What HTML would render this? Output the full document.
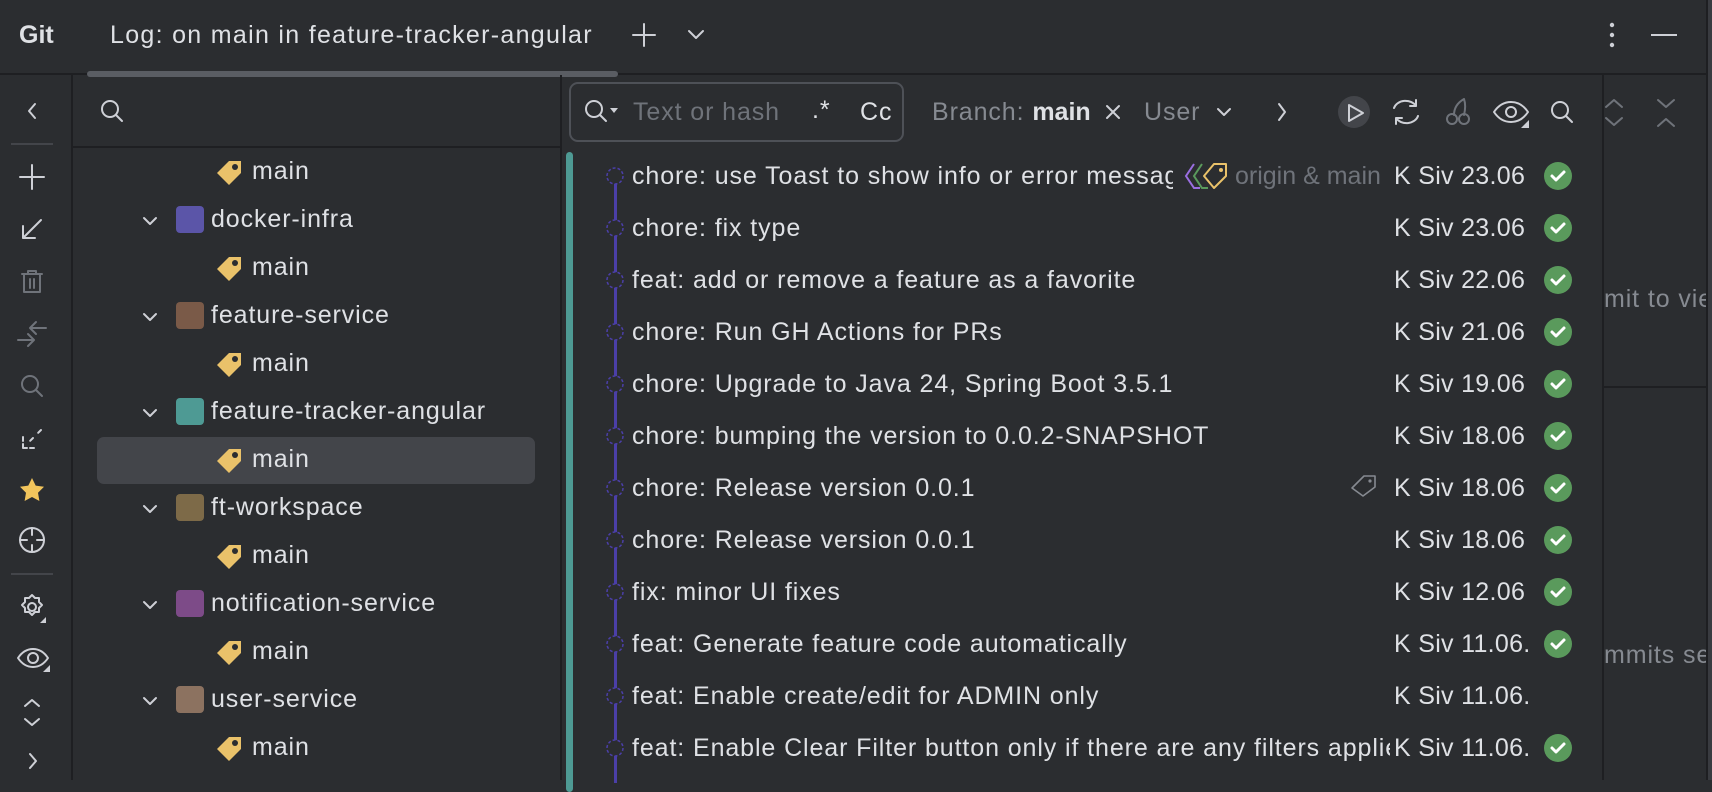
<!DOCTYPE html>
<html><head><meta charset="utf-8"><style>
*{margin:0;padding:0;box-sizing:border-box}
body{width:1712px;height:780px;background:#2b2d30;font-family:"Liberation Sans",sans-serif;color:#dfe1e5;position:relative;overflow:hidden}
.a{position:absolute;white-space:nowrap}
.t{font-size:25px;line-height:30px;letter-spacing:0.9px}
svg{position:absolute;overflow:visible}
.ic{stroke:#ced0d6;fill:none;stroke-width:2;stroke-linecap:round;stroke-linejoin:round}
.dim{stroke:#6f737a}
</style></head><body>
<div class="a" style="left:0;top:73px;width:1712px;height:2px;background:#1e1f22"></div>
<div class="a t" style="left:19px;top:20px;font-weight:bold;color:#dfe1e5;letter-spacing:0">Git</div>
<div class="a t" style="left:110px;top:20px;letter-spacing:1.3px">Log: on main in feature-tracker-angular</div>
<div class="a" style="left:87px;top:71px;width:531px;height:6px;border-radius:3px;background:#5a5d63"></div>
<svg style="left:632px;top:23px" width="24" height="24"><path class="ic" d="M12 1v22M1 12h22"/></svg>
<svg style="left:687px;top:29px" width="18" height="12"><path class="ic" d="M2 2l7 7 7-7"/></svg>
<svg style="left:1608px;top:22px" width="8" height="26"><circle cx="4" cy="3" r="2.2" fill="#ced0d6"/><circle cx="4" cy="13" r="2.2" fill="#ced0d6"/><circle cx="4" cy="23" r="2.2" fill="#ced0d6"/></svg>
<div class="a" style="left:1651px;top:34px;width:26px;height:2px;background:#ced0d6"></div>

<div class="a" style="left:71px;top:75px;width:2px;height:705px;background:#1e1f22"></div>
<svg style="left:26px;top:102px" width="12" height="18"><path class="ic" d="M9 2L3 9l6 7"/></svg>
<div class="a" style="left:11px;top:143px;width:42px;height:2px;background:#43454a"></div>
<svg style="left:18px;top:163px" width="28" height="28"><path class="ic" d="M14 2v24M2 14h24"/></svg>
<svg style="left:20px;top:217px" width="24" height="24"><path class="ic" d="M21 3L3 21M3 9v12h12"/></svg>
<svg style="left:20px;top:268px" width="24" height="28"><path class="ic dim" d="M2 6h20M8 6V3h8v3M4 6v18h16V6M10 11v9M14 11v9"/></svg>
<svg style="left:16px;top:320px" width="32" height="28"><path class="ic dim" d="M30 8H14M20 2l-6 6 6 6M2 20h16M12 14l6 6-6 6"/></svg>
<svg style="left:20px;top:374px" width="26" height="26"><circle class="ic dim" cx="10" cy="10" r="8"/><path class="ic dim" d="M16 16l6 6"/></svg>
<svg style="left:20px;top:427px" width="24" height="24"><path class="ic" d="M21 3l-4 4M13 11l-4 4M3 21V9M3 21h12" stroke-dasharray="4 3"/></svg>
<svg style="left:19px;top:477px" width="26" height="26"><path fill="#f2c55c" d="M13 1l3.7 7.6 8.3 1.2-6 5.9 1.4 8.3L13 20l-7.4 4 1.4-8.3-6-5.9 8.3-1.2z"/></svg>
<svg style="left:18px;top:526px" width="28" height="28"><circle class="ic" cx="14" cy="14" r="12"/><path class="ic" d="M14 2v7M14 19v7M2 14h7M19 14h7"/></svg>
<div class="a" style="left:11px;top:573px;width:42px;height:2px;background:#43454a"></div>
<svg style="left:18px;top:593px" width="30" height="30"><circle class="ic" cx="14" cy="14" r="4"/><path class="ic" d="M14 2l3 3h4v4l3 3-3 3v4h-4l-3 3-3-3H7v-4l-3-3 3-3V5h4z"/><path d="M28 24v6h-6z" fill="#ced0d6"/></svg>
<svg style="left:16px;top:645px" width="34" height="28"><path class="ic" d="M2 13c4-6 9-9 15-9s11 3 15 9c-4 6-9 9-15 9S6 19 2 13z"/><circle class="ic" cx="17" cy="13" r="5"/><path d="M34 20v7h-7z" fill="#ced0d6"/></svg>
<svg style="left:22px;top:697px" width="20" height="32"><path class="ic" d="M3 9l7-6 7 6M3 22l7 6 7-6"/></svg>
<svg style="left:27px;top:752px" width="12" height="18"><path class="ic" d="M3 2l6 7-6 7"/></svg>

<svg style="left:100px;top:99px" width="26" height="26"><circle class="ic" cx="10" cy="10" r="8"/><path class="ic" d="M16 16l6 6"/></svg>
<div class="a" style="left:73px;top:146px;width:488px;height:2px;background:#1e1f22"></div>
<div class="a" style="left:560px;top:75px;width:2px;height:705px;background:#1e1f22"></div>
<div class="a" style="left:97px;top:437px;width:438px;height:47px;border-radius:7px;background:#43454a"></div>
<div id="tree"></div>

<div class="a" style="left:569px;top:82px;width:335px;height:60px;border:2px solid #4e5157;border-radius:9px"></div>
<svg style="left:584px;top:99px" width="34" height="26"><circle class="ic" cx="10" cy="10" r="8"/><path class="ic" d="M16 16l6 6"/><path d="M26 9h8l-4 5z" fill="#ced0d6"/></svg>
<div class="a t" style="left:633px;top:97px;color:#6f737a">Text or hash</div>
<div class="a t" style="left:812px;top:95px;color:#dfe1e5">.*</div>
<div class="a t" style="left:860px;top:97px;color:#dfe1e5">Cc</div>
<div class="a t" style="left:932px;top:97px;color:#868a91">Branch: <span style="color:#dfe1e5;font-weight:bold;letter-spacing:0">main</span></div>
<svg style="left:1106px;top:105px" width="14" height="14"><path class="ic" stroke="#868a91" d="M1 1l12 12M13 1L1 13"/></svg>
<div class="a t" style="left:1144px;top:97px;color:#868a91">User</div>
<svg style="left:1216px;top:107px" width="16" height="10"><path class="ic" d="M2 2l6 6 6-6"/></svg>
<svg style="left:1276px;top:102px" width="12" height="20"><path class="ic" d="M3 2l6 8-6 8"/></svg>
<div class="a" style="left:1338px;top:96px;width:32px;height:32px;border-radius:16px;background:#43454a"></div>
<svg style="left:1347px;top:103px" width="18" height="20"><path class="ic" stroke="#9a9da3" d="M2 2v16l14-8z"/></svg>
<svg style="left:1390px;top:98px" width="32" height="28"><path class="ic" d="M4 10a12 10 0 0 1 22-2M28 18a12 10 0 0 1-22 2M26 2v6h-6M6 26v-6h6"/></svg>
<svg style="left:1444px;top:97px" width="28" height="30"><path class="ic dim" d="M10 18c0-6 3-12 10-16M20 2c2 6 1 12 0 16"/><circle class="ic dim" cx="8" cy="22" r="5"/><circle class="ic dim" cx="20" cy="22" r="5"/></svg>
<svg style="left:1492px;top:99px" width="38" height="30"><path class="ic" d="M2 13c4-6 10-10 17-10s13 4 17 10c-4 6-10 10-17 10S6 19 2 13z"/><circle class="ic" cx="19" cy="13" r="5"/><path d="M37 21v8h-8z" fill="#ced0d6"/></svg>
<svg style="left:1550px;top:100px" width="26" height="26"><circle class="ic" cx="10" cy="10" r="8"/><path class="ic" d="M16 16l6 6"/></svg>
<svg style="left:1604px;top:98px" width="20" height="30"><path class="ic dim" d="M2 9l8-7 8 7M2 20l8 7 8-7"/></svg>
<svg style="left:1656px;top:98px" width="20" height="30"><path class="ic dim" d="M2 2l8 7 8-7M2 28l8-7 8 7"/></svg>

<div class="a" style="left:566px;top:152px;width:7px;height:640px;border-radius:4px;background:#4e9a94"></div>
<div class="a" style="left:614px;top:183px;width:2.5px;height:600px;background:#4b3fa8"></div>
<div id="log"></div>

<div class="a" style="left:1602px;top:75px;width:2px;height:705px;background:#1e1f22"></div>
<div class="a" style="left:1706px;top:0;width:2px;height:780px;background:#1e1f22"></div>
<div class="a" style="left:1708px;top:0;width:4px;height:780px;background:#393b40"></div>
<div class="a" style="left:1604px;top:386px;width:102px;height:2px;background:#1e1f22"></div>
<div class="a" style="left:1604px;top:280px;width:102px;height:40px;overflow:hidden"><div class="a t" style="left:0;top:4px;color:#868a91">mit to view</div></div>
<div class="a" style="left:1604px;top:636px;width:102px;height:40px;overflow:hidden"><div class="a t" style="left:0;top:4px;color:#868a91">mmits sel</div></div>

<script>
var tr=[["main",2],["docker-infra",1,"#5b55a8"],["main",2],["feature-service",1,"#7a5a48"],["main",2],["feature-tracker-angular",1,"#4e9a94"],["main",2],["ft-workspace",1,"#7d6a48"],["main",2],["notification-service",1,"#7d4b88"],["main",2],["user-service",1,"#8c7260"],["main",2]];
var h="";
tr.forEach(function(r,i){var y=172+48*i;
if(r[1]==1){h+='<svg style="left:142px;top:'+(y-4)+'px" width="16" height="10"><path class="ic" d="M2 2l6 6 6-6"/></svg>';
h+='<div class="a" style="left:176px;top:'+(y-14)+'px;width:28px;height:27px;border-radius:4px;background:'+r[2]+'"></div>';
h+='<div class="a t" style="left:211px;top:'+(y-16)+'px">'+r[0]+'</div>';}
else{h+='<svg style="left:215px;top:'+(y-13)+'px" width="28" height="26"><path fill="#eac26a" d="M2 14L14 2h12v12L14 26z"/><circle cx="20" cy="8" r="3" fill="#2b2d30"/></svg>';
h+='<div class="a t" style="left:252px;top:'+(y-16)+'px">main</div>';}});
document.getElementById('tree').outerHTML=h;
var lg=[["chore: use Toast to show info or error message","23.06",1],["chore: fix type","23.06",1],["feat: add or remove a feature as a favorite","22.06",1],["chore: Run GH Actions for PRs","21.06",1],["chore: Upgrade to Java 24, Spring Boot 3.5.1","19.06",1],["chore: bumping the version to 0.0.2-SNAPSHOT","18.06",1],["chore: Release version 0.0.1","18.06",1],["chore: Release version 0.0.1","18.06",1],["fix: minor UI fixes","12.06",1],["feat: Generate feature code automatically","11.06.",1],["feat: Enable create/edit for ADMIN only","11.06.",0],["feat: Enable Clear Filter button only if there are any filters applied","11.06.",1]];
h="";
lg.forEach(function(r,i){var y=176+52*i;var w=i==0?541:(i==11?758:700);
h+='<svg style="left:606px;top:'+(y-9)+'px" width="18" height="18"><circle cx="9" cy="9" r="8" fill="#2b2d30" stroke="#4b3fa8" stroke-width="1.5" stroke-dasharray="3 2"/></svg>';
h+='<div class="a t" style="left:632px;top:'+(y-15)+'px;width:'+w+'px;overflow:hidden">'+r[0]+'</div>';
h+='<div class="a t" style="left:1394px;top:'+(y-15)+'px;width:135px;overflow:hidden;letter-spacing:0.3px">K Siv '+r[1]+'</div>';
if(r[2])h+='<svg style="left:1544px;top:'+(y-14)+'px" width="28" height="28"><circle cx="14" cy="14" r="14" fill="#5a9a5c"/><path d="M8 14l4 4 8-8" stroke="#fff" stroke-width="3" fill="none" stroke-linecap="round" stroke-linejoin="round"/></svg>';
});
h+='<svg style="left:1184px;top:162px" width="46" height="28"><path d="M10 2L2 14l8 12h6" stroke="#9a6ee0" stroke-width="2" fill="none"/><path d="M18 2l-8 12 8 12h6" stroke="#5a9a5c" stroke-width="2" fill="none"/><path d="M30 2h12v12L30 26l-10-12z" stroke="#eac26a" stroke-width="2" fill="none" stroke-linejoin="round"/><circle cx="37" cy="8" r="2" fill="#eac26a"/></svg>';
h+='<div class="a t" style="left:1235px;top:161px;color:#6f737a;letter-spacing:0">origin &amp; main</div>';
h+='<svg style="left:1350px;top:474px" width="28" height="24"><path d="M2 14L14 2h11v11L13 22z" stroke="#868a91" stroke-width="1.6" fill="none" stroke-linejoin="round"/><circle cx="20" cy="7" r="1.6" fill="#868a91"/></svg>';
document.getElementById('log').outerHTML=h;
</script>
</body></html>
